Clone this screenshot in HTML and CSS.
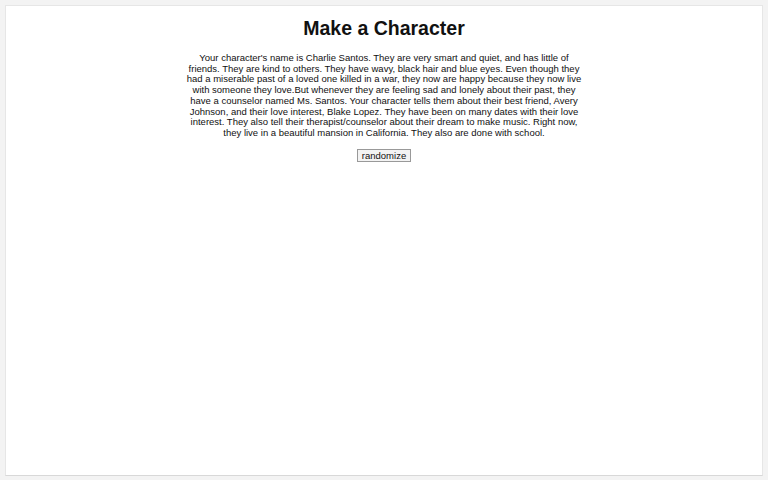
FILE: index.html
```html
<!DOCTYPE html>
<html lang="en">
<head>
    <meta charset="UTF-8">
    <meta name="viewport" content="width=device-width, initial-scale=1.0">
    <title>Make a Character</title>
    <link rel="stylesheet" href="styles.css">
</head>
<body>

    <div class="page">
        <h1>Make a Character</h1>
        <p class="story">Your character's name is Charlie Santos. They are very smart and quiet, and has little of friends. They are kind to others. They have wavy, black hair and blue eyes. Even though they had a miserable past of a loved one killed in a war, they now are happy because they now live with someone they love.But whenever they are feeling sad and lonely about their past, they have a counselor named Ms. Santos. Your character tells them about their best friend, Avery Johnson, and their love interest, Blake Lopez. They have been on many dates with their love interest. They also tell their therapist/counselor about their dream to make music. Right now, they live in a beautiful mansion in California. They also are done with school.</p>
        <button class="randomize-button">randomize</button>
    </div>

</body>
</html>
```

FILE: styles.css
```css
/* Estilos gerais */
html, body {
    height: 100%;
}
body {
    font-family: 'Liberation Sans', Arial, sans-serif;
    background-color: #f3f3f3;
    margin: 0;
    padding: 5px 5px 4px 5px;
    box-sizing: border-box;
    color: #111;
}

/* Folha branca */
.page {
    background: #fff;
    height: 100%;
    box-sizing: border-box;
    border: 1px solid #e6e6e6;
    border-bottom-color: #d8d8d8;
    display: flex; flex-direction: column; align-items: center;
    text-align: center;
    padding-top: 11px;
}

.page h1 {
    font-size: 19.5px; font-weight: bold;
    margin: 0 0 14px 0; line-height: 22px;
}

.story {
    width: 400px; margin: 0;
    font-size: 9.5px; line-height: 10.7px;
    color: #111;
}

.randomize-button {
    margin-top: 10px;
    font-family: 'Liberation Sans', Arial, sans-serif;
    font-size: 9.5px; line-height: 11px;
    padding: 0 4px;
    color: #111;
    background: #f3f3f3;
    border: 1px solid #999;
    border-radius: 0;
}
```
